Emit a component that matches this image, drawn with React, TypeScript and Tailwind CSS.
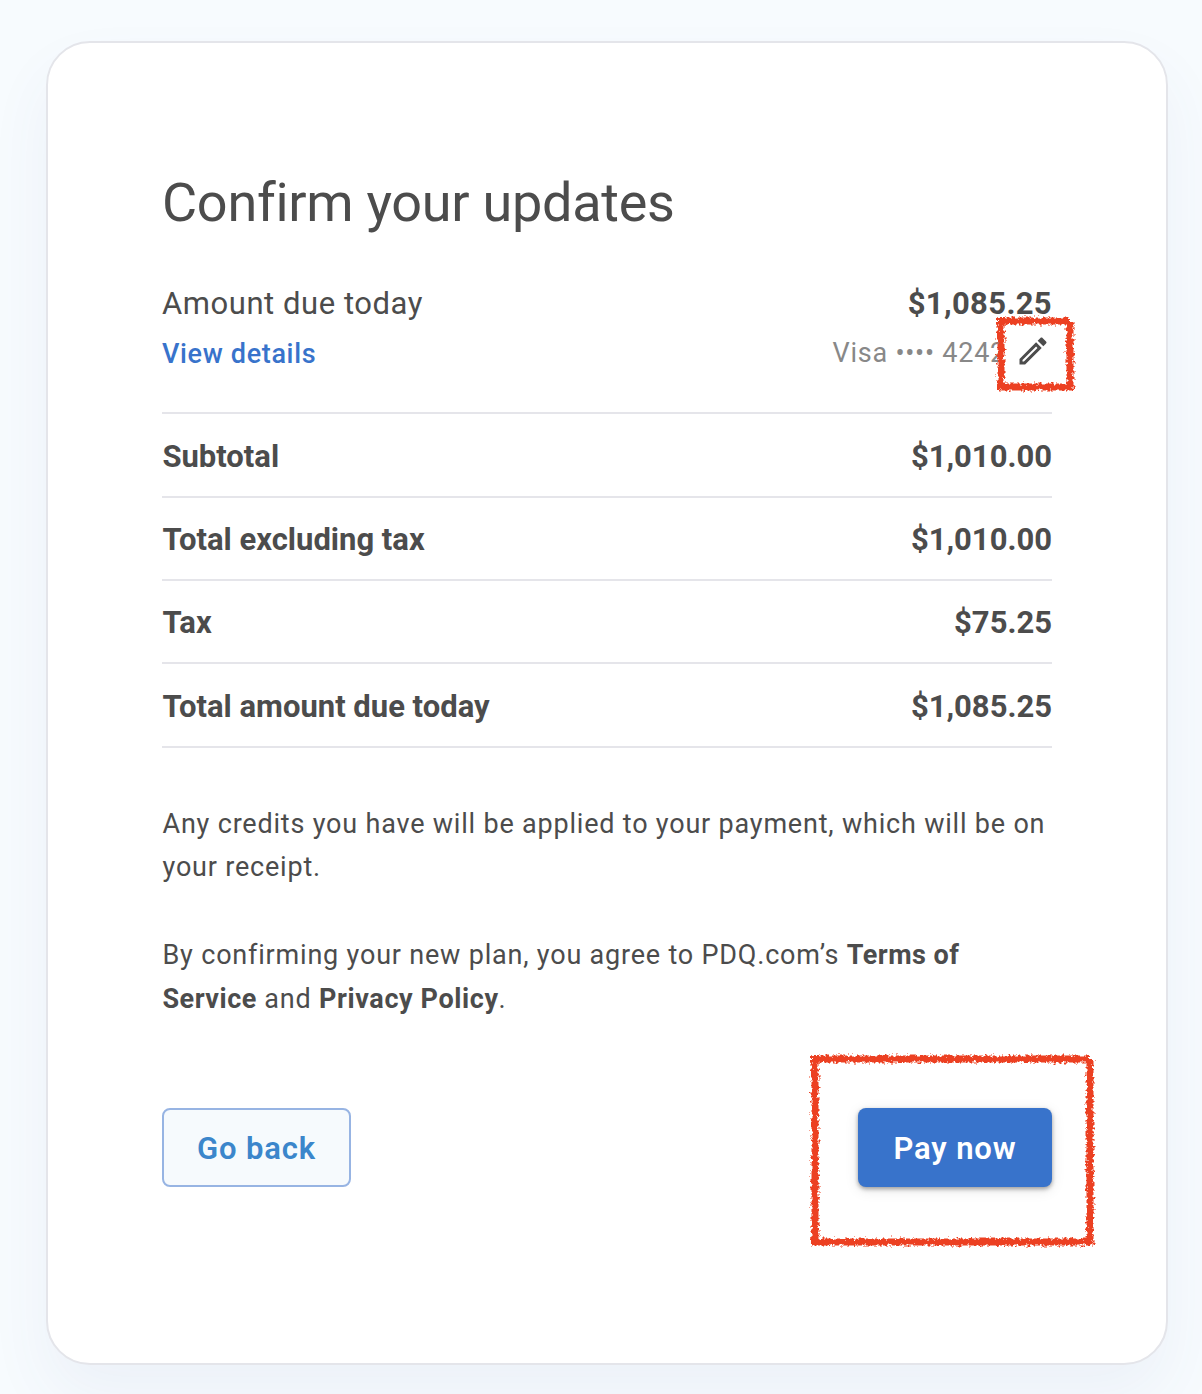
import { MdOutlineEdit } from "react-icons/md";

interface LineItem {
  label: string;
  amount: string;
}

const LINE_ITEMS: LineItem[] = [
  { label: "Subtotal", amount: "$1,010.00" },
  { label: "Total excluding tax", amount: "$1,010.00" },
  { label: "Tax", amount: "$75.25" },
  { label: "Total amount due today", amount: "$1,085.25" },
];

function Highlight({ id, width, height, className }: { id: string; width: number; height: number; className: string }) {
  return (
    <svg
      width={width + 12}
      height={height + 12}
      className={`absolute pointer-events-none ${className}`}
      fill="none"
      stroke="#ec4024"
      strokeWidth="7"
      aria-hidden="true"
    >
      {/* crayon edge */}
      <filter id={id} x="0" y="0" width={width + 12} height={height + 12} filterUnits="userSpaceOnUse">
        <feTurbulence type="fractalNoise" baseFrequency="0.35" numOctaves="3" seed="4" />
        <feDisplacementMap in="SourceGraphic" scale="7" xChannelSelector="R" yChannelSelector="G" />
      </filter>
      <path
        filter={`url(#${id})`}
        d={`M6 10H${width + 1}M${width + 2} 11V${height + 5}M${width + 5} ${height + 2}H6M10 ${height + 5}V6`}
      />
    </svg>
  );
}

function LineItemRow({ label, amount }: LineItem) {
  return (
    <div className="flex h-[83.4px] items-center justify-between border-b-2 border-[#e5e5ea] pt-[4px] text-[31px] font-bold">
      <span className="pl-[0.4px]">{label}</span>
      <span>{amount}</span>
    </div>
  );
}

export default function App() {
  return (
    <main className="h-[1394px] overflow-hidden bg-[#f7fbfe] pt-[41px] pl-[46px] font-[Roboto,sans-serif] text-[#4c4c4c]">
      <section className="h-[1324px] w-[1122px] rounded-[44px] border-2 border-[#e4e5ea] bg-white px-[114px] pt-[127px] shadow-[0_32px_64px_rgba(60,80,150,0.06)]">
        <h1 className="text-[54px] leading-[66px] tracking-[-0.28px]">Confirm your updates</h1>

        <div className="mt-[44px] flex items-center justify-between leading-[48px]">
          <span className="text-[31px] tracking-[0.55px]">Amount due today</span>
          <span className="text-[31px] font-bold tracking-[0.35px]">$1,085.25</span>
        </div>
        <div className="flex h-[50px] items-center justify-between text-[27px] tracking-[0.75px]">
          <a href="#" className="pt-[2px] font-medium tracking-[0.65px] text-[#3873cb]">View details</a>
          <div className="relative flex items-center text-[#888888]">
            <span>Visa •••• 4242</span>
            <button className="relative -top-[2px] mr-px ml-[9px] text-[#4c4c4c]" aria-label="Edit payment method">
              <MdOutlineEdit size={36} />
            </button>
            <Highlight id="edit-edge" width={77} height={74} className="-right-[28px] -top-[22px]" />
          </div>
        </div>

        <div className="mt-[34.2px] border-t-2 border-[#e5e5ea]">
          {LINE_ITEMS.map((item) => (
            <LineItemRow key={item.label} {...item} />
          ))}
        </div>

        <div className="-mr-1 mt-[54.8px] space-y-[44px] pl-[0.5px] text-[27px] leading-[43.75px] tracking-[0.8px]">
          <p>Any credits you have will be applied to your payment, which will be on your receipt.</p>
          <p>
            By confirming your new plan, you agree to PDQ.com’s{" "}
            <b className="tracking-[0.5px]">Terms of <br />Service</b> and{" "}
            <b className="tracking-[0.6px]">Privacy Policy</b>.
          </p>
        </div>

        <div className="mt-[86.5px] flex justify-between text-[31px] font-semibold tracking-[0.85px]">
          <button className="h-[79px] w-[189px] rounded-[8px] border-2 border-[#97b4e3] bg-[#f6fafd] pt-[4px] text-[#3b86cb]">
            Go back
          </button>
          <div className="relative">
            <button className="h-[79px] w-[194px] rounded-[8px] bg-[#3873cb] pt-[4px] text-white shadow-[0_2px_4px_rgba(0,0,0,0.35),0_3px_14px_rgba(0,0,0,0.1)]">
              Pay now
            </button>
            <Highlight id="pay-edge" width={283} height={191} className="-left-[53px] -top-[59px]" />
          </div>
        </div>
      </section>
    </main>
  );
}
